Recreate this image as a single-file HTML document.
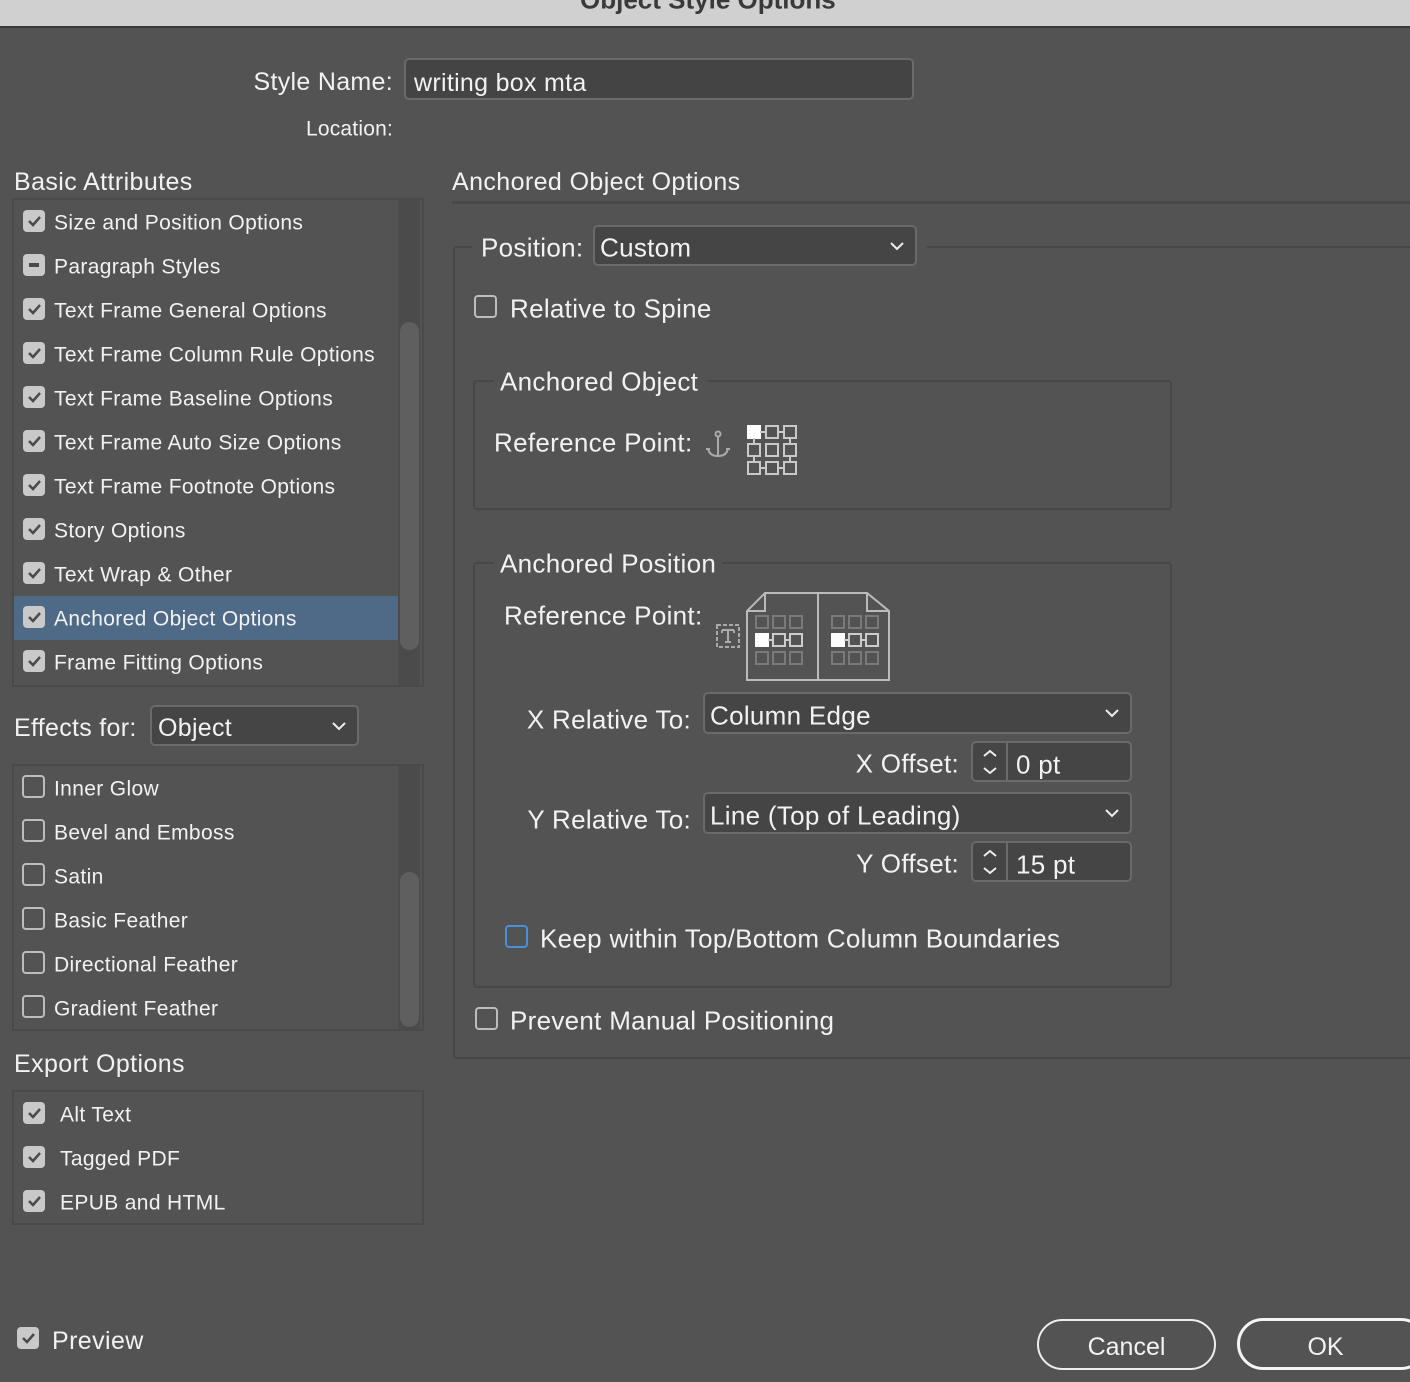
<!DOCTYPE html>
<html><head><meta charset="utf-8"><style>
*{margin:0;padding:0;box-sizing:border-box}
body{width:1410px;height:1382px;background:#535353;position:relative;overflow:hidden;font-family:"Liberation Sans","DejaVu Sans",sans-serif;color:#f2f2f2}
.a{position:absolute}
.t{position:absolute;white-space:nowrap;line-height:1.2;transform:translateY(-50%);margin-top:2px}
.cb{position:absolute;width:22px;height:22px;border-radius:4px;background:#c9c9c9}
.cb svg{position:absolute;left:0;top:0}
.ub{position:absolute;width:23px;height:23px;border-radius:4px;border:2px solid #bdbdbd}
.panel{position:absolute;background:#535353;border:2px solid #4a4a4a}
.track{position:absolute;background:#4b4b4b}
.thumb{position:absolute;background:#5f5f5f;border-radius:10px}
.sel{position:absolute;background:#454545;border:2px solid #6a6a6a;border-radius:5px}
.chev{position:absolute;right:10px;top:50%;transform:translateY(-50%)}
.grp{position:absolute;border:2px solid #474747;border-radius:4px}
.leg{position:absolute;background:#535353;padding:0 6px}
.r{font-size:26px;letter-spacing:0.3px}
</style></head><body>
<div class="a" style="left:0;top:0;width:1410px;height:28px;background:#d0d0d0;border-bottom:2px solid #3a3a3a"></div>
<div class="t" style="left:580px;top:0px;font-size:26px;font-weight:bold;color:#3a3a3a;margin-top:0">Object Style Options</div>

<div class="t" style="right:1017px;top:80px;font-size:25px;letter-spacing:0.3px">Style Name:</div>
<div class="a" style="left:404px;top:58px;width:510px;height:42px;background:#444;border:2px solid #6a6a6a;border-radius:5px"></div>
<div class="t" style="left:414px;top:81px;font-size:25px;letter-spacing:0.3px">writing box mta</div>
<div class="t" style="right:1017px;top:127px;font-size:21px;letter-spacing:0.2px">Location:</div>

<div class="t" style="left:14px;top:180px;font-size:25px;letter-spacing:0.4px">Basic Attributes</div>
<div class="panel" style="left:12px;top:198px;width:412px;height:489px"></div>
<div class="track" style="left:398px;top:200px;width:22px;height:485px"></div>
<div class="thumb" style="left:400px;top:322px;width:19px;height:328px"></div>
<div class="a" style="left:14px;top:596px;width:384px;height:44px;background:#4e6a87"></div>

<div class="t" style="left:14px;top:726px;font-size:25px;letter-spacing:0.3px">Effects for:</div>
<div class="sel" style="left:150px;top:705px;width:209px;height:41px"><svg class="chev" width="16" height="10" viewBox="0 0 16 10"><path d="M2 2l6 6 6-6" fill="none" stroke="#eee" stroke-width="2"/></svg></div>
<div class="t" style="left:158px;top:726px;font-size:25px;letter-spacing:0.3px">Object</div>

<div class="panel" style="left:12px;top:764px;width:412px;height:267px"></div>
<div class="track" style="left:398px;top:766px;width:22px;height:263px"></div>
<div class="thumb" style="left:400px;top:872px;width:19px;height:155px"></div>

<div class="t" style="left:14px;top:1062px;font-size:25px;letter-spacing:0.4px">Export Options</div>
<div class="panel" style="left:12px;top:1090px;width:412px;height:135px"></div>

<div class="t" style="left:452px;top:180px;font-size:25px;letter-spacing:0.4px">Anchored Object Options</div>
<div class="a" style="left:452px;top:201px;width:958px;height:3px;background:#484848"></div>
<div class="grp" style="left:453px;top:246px;width:1000px;height:813px"></div>
<div class="leg" style="left:472px;top:226px;height:40px;width:124px"></div>
<div class="t r" style="left:481px;top:246px">Position:</div>
<div class="sel" style="left:593px;top:225px;width:324px;height:41px"><svg class="chev" width="16" height="10" viewBox="0 0 16 10"><path d="M2 2l6 6 6-6" fill="none" stroke="#eee" stroke-width="2"/></svg></div>
<div class="t r" style="left:600px;top:246px">Custom</div>
<div class="a" style="left:917px;top:230px;width:10px;height:40px;background:#535353"></div>

<div class="ub" style="left:474px;top:295px"></div>
<div class="t r" style="left:510px;top:307px">Relative to Spine</div>

<div class="grp" style="left:473px;top:380px;width:699px;height:130px"></div>
<div class="leg" style="left:494px;top:366px;height:30px;width:214px"></div>
<div class="t r" style="left:500px;top:380px">Anchored Object</div>
<div class="t r" style="left:494px;top:441px">Reference Point:</div>
<svg class="a" style="left:704px;top:430px" width="28" height="30" viewBox="0 0 28 30"><circle cx="14" cy="4" r="2.5" fill="none" stroke="#aaa" stroke-width="2"/><path d="M14 7v19M4 18q1 8 10 8q9 0 10-8M2 19h4M22 19h4" fill="none" stroke="#aaa" stroke-width="2"/></svg>
<svg class="a" style="left:746px;top:424px" width="52" height="52" viewBox="0 0 52 52" fill="none" stroke="#c9c9c9" stroke-width="2">
<rect x="2" y="2" width="12" height="12" fill="#fff" stroke="#fff"/><rect x="20" y="2" width="12" height="12"/><rect x="38" y="2" width="12" height="12"/>
<rect x="2" y="20" width="12" height="12"/><rect x="20" y="20" width="12" height="12"/><rect x="38" y="20" width="12" height="12"/>
<rect x="2" y="38" width="12" height="12"/><rect x="20" y="38" width="12" height="12"/><rect x="38" y="38" width="12" height="12"/>
<path d="M14 8h6M32 8h6M8 14v6M44 14v6M8 32v6M44 32v6M14 44h6M32 44h6"/></svg>

<div class="grp" style="left:473px;top:562px;width:699px;height:426px"></div>
<div class="leg" style="left:494px;top:548px;height:30px;width:228px"></div>
<div class="t r" style="left:500px;top:562px">Anchored Position</div>
<div class="t r" style="left:504px;top:614px">Reference Point:</div>
<svg class="a" style="left:715px;top:623px" width="26" height="26" viewBox="0 0 26 26" fill="none" stroke="#aaa" stroke-width="2"><rect x="2" y="2" width="22" height="22" stroke-dasharray="4 2"/><path d="M7 7h12M13 7v12M10 19h6M7 7v3M19 7v3"/></svg>
<svg class="a" style="left:745px;top:592px" width="146" height="90" viewBox="0 0 146 90" fill="none" stroke-width="2">
<path d="M2 88V19L20 1H122L144 19V88ZM73 1V88M20 1V19H2M122 1V19H144" stroke="#bbb"/>
<g stroke="#7a7a7a"><rect x="11" y="24" width="12" height="12"/><rect x="28" y="24" width="12" height="12"/><rect x="45" y="24" width="12" height="12"/><rect x="11" y="60" width="12" height="12"/><rect x="28" y="60" width="12" height="12"/><rect x="45" y="60" width="12" height="12"/>
<rect x="87" y="24" width="12" height="12"/><rect x="104" y="24" width="12" height="12"/><rect x="121" y="24" width="12" height="12"/><rect x="87" y="60" width="12" height="12"/><rect x="104" y="60" width="12" height="12"/><rect x="121" y="60" width="12" height="12"/></g>
<g stroke="#ccc"><rect x="11" y="42" width="12" height="12" fill="#fff" stroke="#fff"/><rect x="28" y="42" width="12" height="12"/><rect x="45" y="42" width="12" height="12"/><path d="M23 48h5M40 48h5"/>
<rect x="87" y="42" width="12" height="12" fill="#fff" stroke="#fff"/><rect x="104" y="42" width="12" height="12"/><rect x="121" y="42" width="12" height="12"/><path d="M99 48h5M116 48h5"/></g></svg>

<div class="t r" style="right:719px;top:718px">X Relative To:</div>
<div class="sel" style="left:703px;top:692px;width:429px;height:42px"><svg class="chev" width="16" height="10" viewBox="0 0 16 10"><path d="M2 2l6 6 6-6" fill="none" stroke="#eee" stroke-width="2"/></svg></div>
<div class="t r" style="left:710px;top:714px">Column Edge</div>
<div class="t r" style="right:451px;top:762px">X Offset:</div>
<div class="sel" style="left:971px;top:741px;width:161px;height:41px"><div class="a" style="left:33px;top:0;width:2px;height:37px;background:#6a6a6a"></div><svg class="a" style="left:8px;top:4px" width="18" height="30" viewBox="0 0 18 30"><path d="M3 9l6-5 6 5M3 21l6 5 6-5" fill="none" stroke="#eee" stroke-width="2"/></svg></div>
<div class="t r" style="left:1016px;top:763px">0 pt</div>

<div class="t r" style="right:719px;top:818px">Y Relative To:</div>
<div class="sel" style="left:703px;top:792px;width:429px;height:42px"><svg class="chev" width="16" height="10" viewBox="0 0 16 10"><path d="M2 2l6 6 6-6" fill="none" stroke="#eee" stroke-width="2"/></svg></div>
<div class="t r" style="left:710px;top:814px">Line (Top of Leading)</div>
<div class="t r" style="right:451px;top:862px">Y Offset:</div>
<div class="sel" style="left:971px;top:841px;width:161px;height:41px"><div class="a" style="left:33px;top:0;width:2px;height:37px;background:#6a6a6a"></div><svg class="a" style="left:8px;top:4px" width="18" height="30" viewBox="0 0 18 30"><path d="M3 9l6-5 6 5M3 21l6 5 6-5" fill="none" stroke="#eee" stroke-width="2"/></svg></div>
<div class="t r" style="left:1016px;top:863px">15 pt</div>

<div class="ub" style="left:505px;top:925px;border-color:#4a90d9"></div>
<div class="t r" style="left:540px;top:937px">Keep within Top/Bottom Column Boundaries</div>
<div class="ub" style="left:475px;top:1007px"></div>
<div class="t r" style="left:510px;top:1019px">Prevent Manual Positioning</div>

<div class="cb" style="left:17px;top:1327px"><svg width="22" height="22"><path d="M6 11l4 4 7-8" fill="none" stroke="#4a4a4a" stroke-width="2.5"/></svg></div>
<div class="t" style="left:52px;top:1339px;font-size:25px;letter-spacing:0.4px">Preview</div>

<div class="a" style="left:1037px;top:1319px;width:179px;height:51px;border:2px solid #eee;border-radius:26px"></div>
<div class="t" style="left:1037px;width:179px;text-align:center;top:1345px;font-size:25px">Cancel</div>
<div class="a" style="left:1237px;top:1318px;width:190px;height:52px;border:3px solid #f5f5f5;border-radius:26px"></div>
<div class="t" style="left:1237px;width:177px;text-align:center;top:1345px;font-size:25px">OK</div>

<div id="basic"></div>
<script>
function cb(x,y,type){
  if(type=='c')return '<div class="cb" style="left:'+x+'px;top:'+y+'px"><svg width="22" height="22"><path d="M6 11l4 4 7-8" fill="none" stroke="#4a4a4a" stroke-width="2.5"/></svg></div>';
  if(type=='m')return '<div class="cb" style="left:'+x+'px;top:'+y+'px"><div class="a" style="left:6px;top:9px;width:10px;height:4px;background:#4a4a4a"></div></div>';
  return '<div class="ub" style="left:'+x+'px;top:'+y+'px"></div>';
}
var h='';
var st='font-size:21px;letter-spacing:0.35px';
var b=["Size and Position Options","Paragraph Styles","Text Frame General Options","Text Frame Column Rule Options","Text Frame Baseline Options","Text Frame Auto Size Options","Text Frame Footnote Options","Story Options","Text Wrap & Other","Anchored Object Options","Frame Fitting Options"];
b.forEach(function(s,i){var y=221+44*i;h+=cb(23,y-11,i==1?'m':'c')+'<div class="t" style="left:54px;top:'+y+'px;'+st+'">'+s.replace('&','&amp;')+'</div>';});
var e=["Inner Glow","Bevel and Emboss","Satin","Basic Feather","Directional Feather","Gradient Feather"];
e.forEach(function(s,i){var y=787+44*i;h+=cb(22,y-12,'u')+'<div class="t" style="left:54px;top:'+y+'px;'+st+'">'+s+'</div>';});
var x=["Alt Text","Tagged PDF","EPUB and HTML"];
x.forEach(function(s,i){var y=1113+44*i;h+=cb(23,y-11,'c')+'<div class="t" style="left:60px;top:'+y+'px;'+st+'">'+s+'</div>';});
document.getElementById('basic').outerHTML=h;
</script>
</body></html>
